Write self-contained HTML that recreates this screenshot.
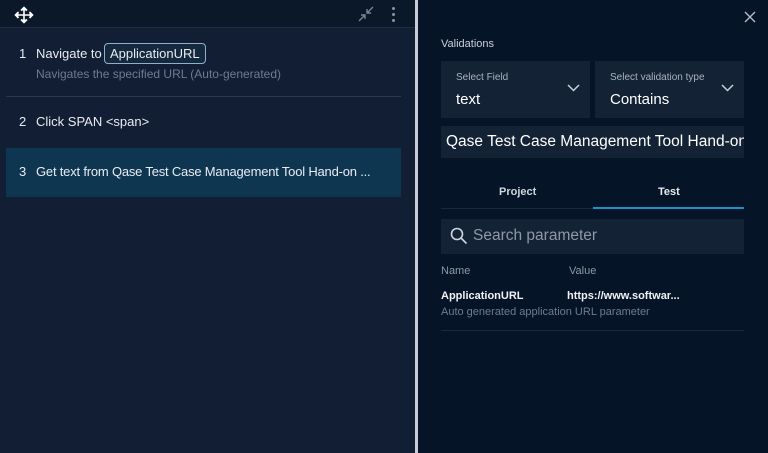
<!DOCTYPE html>
<html><head><meta charset="utf-8"><style>
*{margin:0;padding:0;box-sizing:border-box}
body{width:768px;height:453px;overflow:hidden;font-family:"Liberation Sans",sans-serif;background:#051426;position:relative;color:#fff}
#left{position:absolute;left:0;top:0;width:415px;height:453px;background:#111e33}
#hdr{position:absolute;left:0;top:0;width:415px;height:28px;background:#0b1829;border-bottom:1px solid #1f2c40}
#div{position:absolute;left:415px;top:0;width:3px;height:453px;background:#c8ccd4}
.t{position:absolute;white-space:nowrap}
.n{font-size:13px;color:#e8ecf2}
.sub{font-size:12px;color:#6e7c90}
.hr{position:absolute;height:1px;background:#2a3850}
#sel{position:absolute;left:6px;top:148px;width:395px;height:49px;background:#0f3651}
.box{position:absolute;background:#142236}
.lbl{font-size:10px;color:#a8b2c0}
.big{font-size:15px;color:#fff}
</style></head><body>
<div id="left"></div>
<div id="hdr"></div>
<svg style="position:absolute;left:14px;top:6px" width="20" height="18" viewBox="0 0 20 18" fill="none" stroke="#fff" stroke-width="1.6">
<path d="M10 2v14M2 9h16"/><path d="M7 4.5L10 1.5 13 4.5M7 13.5L10 16.5 13 13.5M4.5 6L1.5 9 4.5 12M15.5 6L18.5 9 15.5 12" fill="#fff"/></svg>
<svg style="position:absolute;left:358px;top:6px" width="16" height="16" viewBox="0 0 16 16" fill="none" stroke="#7a8596" stroke-width="1.4"><path d="M15 1L9 7M9 3v4h4M1 15l6-6M3 9h4v4"/></svg>
<div style="position:absolute;left:392px;top:7px;width:4px;height:16px">
<div style="width:3px;height:3px;border-radius:2px;background:#8a94a4;margin-bottom:3px"></div><div style="width:3px;height:3px;border-radius:2px;background:#8a94a4;margin-bottom:3px"></div><div style="width:3px;height:3px;border-radius:2px;background:#8a94a4"></div></div>
<div class="t n" style="left:19px;top:46px">1</div>
<div class="t n" style="left:36px;top:46px">Navigate to</div>
<div class="t n" style="left:104px;top:43px;border:1px solid #8fb0c8;border-radius:4px;padding:2px 5px 2px 5px;background:#14283e">ApplicationURL</div>
<div class="t sub" style="left:36px;top:67px">Navigates the specified URL (Auto-generated)</div>
<div class="hr" style="left:6px;top:96px;width:395px"></div>
<div class="t n" style="left:19px;top:114px">2</div>
<div class="t n" style="left:36px;top:114px">Click SPAN &lt;span&gt;</div>
<div id="sel"></div>
<div class="t n" style="left:19px;top:164px">3</div>
<div class="t n" style="left:36px;top:164px;letter-spacing:-0.2px">Get text from Qase Test Case Management Tool Hand-on ...</div>
<div id="div"></div>
<svg style="position:absolute;left:744px;top:11px" width="12" height="12" viewBox="0 0 12 12" stroke="#b8c0cc" stroke-width="1.3"><path d="M1 1l10 10M11 1L1 11"/></svg>
<div class="t" style="left:441px;top:38px;font-size:11px;color:#c8d0da">Validations</div>
<div class="box" style="left:441px;top:61px;width:149px;height:57px"></div>
<div class="box" style="left:595px;top:61px;width:149px;height:57px"></div>
<div class="t lbl" style="left:456px;top:72px">Select Field</div>
<div class="t big" style="left:456px;top:91px">text</div>
<div class="t lbl" style="left:610px;top:72px">Select validation type</div>
<div class="t big" style="left:610px;top:91px">Contains</div>
<svg style="position:absolute;left:567px;top:84px" width="13" height="8" viewBox="0 0 13 8" fill="none" stroke="#c8d0da" stroke-width="1.5"><path d="M1 1l5.5 5.5L12 1"/></svg>
<svg style="position:absolute;left:721px;top:84px" width="13" height="8" viewBox="0 0 13 8" fill="none" stroke="#c8d0da" stroke-width="1.5"><path d="M1 1l5.5 5.5L12 1"/></svg>
<div class="box" style="left:441px;top:126px;width:303px;height:32px;overflow:hidden"><div class="t big" style="left:5px;top:7px;font-size:15.5px">Qase Test Case Management Tool Hand-on</div></div>
<div class="t" style="left:499px;top:186px;font-size:11px;font-weight:bold;color:#d0d6de">Project</div>
<div class="t" style="left:658px;top:186px;font-size:11px;font-weight:bold;color:#e8ecf2">Test</div>
<div class="hr" style="left:441px;top:208px;width:303px;background:#1c2838"></div>
<div style="position:absolute;left:593px;top:207px;width:151px;height:2px;background:#1a8fd0"></div>
<div class="box" style="left:441px;top:219px;width:303px;height:35px"></div>
<svg style="position:absolute;left:450px;top:227px" width="18" height="18" viewBox="0 0 18 18" fill="none" stroke="#d0d6de" stroke-width="1.6"><circle cx="7" cy="7" r="5.5"/><path d="M11 11l5.5 5.5"/></svg>
<div class="t" style="left:473px;top:227px;font-size:15.5px;color:#8e98a6">Search parameter</div>
<div class="t" style="left:441px;top:265px;font-size:11px;color:#8e98a6">Name</div>
<div class="t" style="left:569px;top:265px;font-size:11px;color:#8e98a6">Value</div>
<div class="t" style="left:441px;top:290px;font-size:11px;font-weight:bold;color:#f0f2f6">ApplicationURL</div>
<div class="t" style="left:567px;top:290px;font-size:11px;font-weight:bold;color:#f0f2f6">https://www.softwar...</div>
<div class="t" style="left:441px;top:306px;font-size:11px;color:#6e7c90">Auto generated application URL parameter</div>
<div class="hr" style="left:441px;top:330px;width:303px;background:#1c2838"></div>
</body></html>
